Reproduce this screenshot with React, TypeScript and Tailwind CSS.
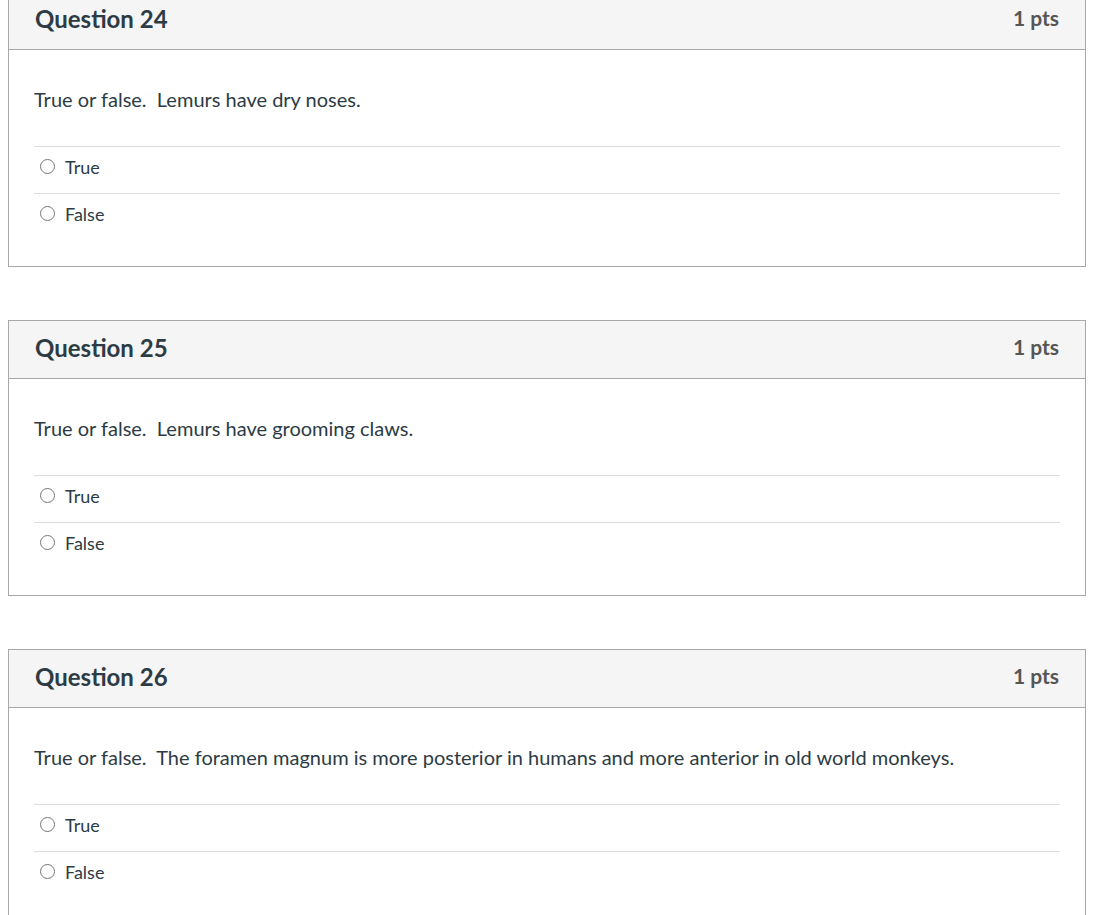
import React from 'react';

interface Question {
  number: number;
  points: number;
  text: string;
  answers: string[];
}

const questions: Question[] = [
  { number: 24, points: 1, text: 'True or false.  Lemurs have dry noses.', answers: ['True', 'False'] },
  { number: 25, points: 1, text: 'True or false.  Lemurs have grooming claws.', answers: ['True', 'False'] },
  {
    number: 26,
    points: 1,
    text: 'True or false.  The foramen magnum is more posterior in humans and more anterior in old world monkeys.',
    answers: ['True', 'False'],
  },
];

function QuestionCard({ question }: { question: Question }) {
  return (
    <div className="border border-[#a8a8a8] bg-white">
      {/* Header */}
      <div className="flex h-[58px] items-center justify-between border-b border-[#a8a8a8] bg-[#f5f5f5] px-[26px] pb-[4px]">
        <h2 className="text-[24px] font-bold text-[#2d3b45]">Question {question.number}</h2>
        <div className="-mt-[2px] text-[21px] font-bold text-[#565656]">{question.points} pts</div>
      </div>

      {/* Body */}
      <div className="px-[25px] pt-[35px] pb-[26px]">
        <div className="mb-[33px] text-[20px] leading-[28px] whitespace-pre text-[#2d3b45]">{question.text}</div>
        <div>
          {question.answers.map((answer) => (
            <label
              key={answer}
              className="flex h-[47px] items-start gap-[10px] border-t border-[#dcdcdc] pt-[8px] pl-[6px]"
            >
              <span className="mt-[4px] h-[15px] w-[15px] shrink-0 rounded-full border border-[#767676] bg-white" />
              <span className="text-[18px] leading-[24px] text-[#2d3b45]">{answer}</span>
            </label>
          ))}
        </div>
      </div>
    </div>
  );
}

export default function App() {
  return (
    <div className="min-h-screen overflow-hidden bg-white font-['Lato','Liberation_Sans',sans-serif]">
      <div className="-mt-[9px] ml-[8px] w-[1078px] space-y-[53px]">
        {questions.map((q) => (
          <QuestionCard key={q.number} question={q} />
        ))}
      </div>
    </div>
  );
}
